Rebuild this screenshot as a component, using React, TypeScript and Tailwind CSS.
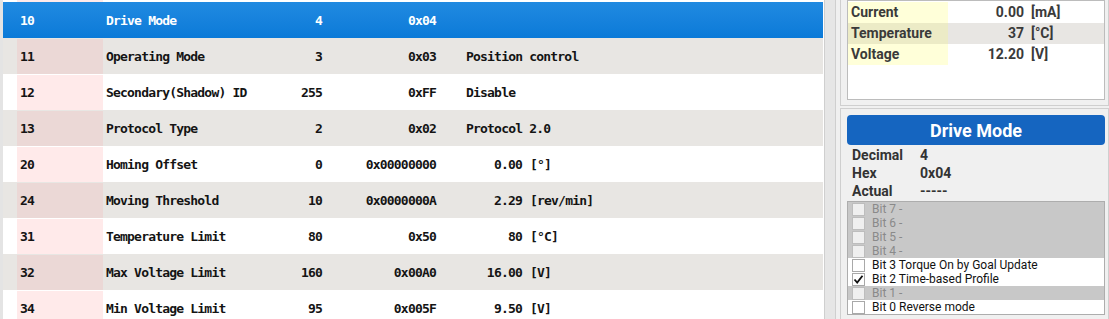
import React from 'react';

type Row = {
  addr: string;
  name: string;
  val: string;
  hex: string;
  desc?: string;
  num?: string;
  unit?: string;
};

const rows: Row[] = [
  { addr: '10', name: 'Drive Mode', val: '4', hex: '0x04', desc: '' },
  { addr: '11', name: 'Operating Mode', val: '3', hex: '0x03', desc: 'Position control' },
  { addr: '12', name: 'Secondary(Shadow) ID', val: '255', hex: '0xFF', desc: 'Disable' },
  { addr: '13', name: 'Protocol Type', val: '2', hex: '0x02', desc: 'Protocol 2.0' },
  { addr: '20', name: 'Homing Offset', val: '0', hex: '0x00000000', num: '0.00', unit: '[°]' },
  { addr: '24', name: 'Moving Threshold', val: '10', hex: '0x0000000A', num: '2.29', unit: '[rev/min]' },
  { addr: '31', name: 'Temperature Limit', val: '80', hex: '0x50', num: '80', unit: '[°C]' },
  { addr: '32', name: 'Max Voltage Limit', val: '160', hex: '0x00A0', num: '16.00', unit: '[V]' },
  { addr: '34', name: 'Min Voltage Limit', val: '95', hex: '0x005F', num: '9.50', unit: '[V]' },
];

const status = [
  { label: 'Current', value: '0.00', unit: '[mA]' },
  { label: 'Temperature', value: '37', unit: '[°C]' },
  { label: 'Voltage', value: '12.20', unit: '[V]' },
];

const bits = [
  { label: 'Bit 7 -', enabled: false, checked: false },
  { label: 'Bit 6 -', enabled: false, checked: false },
  { label: 'Bit 5 -', enabled: false, checked: false },
  { label: 'Bit 4 -', enabled: false, checked: false },
  { label: 'Bit 3 Torque On by Goal Update', enabled: true, checked: false },
  { label: 'Bit 2 Time-based Profile', enabled: true, checked: true },
  { label: 'Bit 1 -', enabled: false, checked: false },
  { label: 'Bit 0 Reverse mode', enabled: true, checked: false },
];

function TableRow({ row, index }: { row: Row; index: number }) {
  const selected = index === 0;
  const gray = index % 2 === 1;
  const rowBg = selected
    ? 'bg-linear-to-b from-[#208ae1] to-[#0a7ad8] text-white'
    : gray
      ? 'bg-[#e8e6e3] text-[#141414]'
      : 'bg-white text-[#141414]';
  const addrBg = selected ? '' : gray ? 'bg-[#ebd8d6]' : 'bg-[#ffeaea]';

  return (
    <div className={`flex h-[36px] items-center pt-[1px] ${rowBg}`}>
      <div className="w-[14px] h-full" />
      <div className={`w-[86px] h-full flex items-center pl-[3px] ${addrBg}`}>{row.addr}</div>
      <div className="w-[147px] pl-[3px] whitespace-pre">{row.name}</div>
      <div className="w-[76px] pr-[4px] text-right">{row.val}</div>
      <div className="w-[114px] pr-[4px] text-right">{row.hex}</div>
      {row.num !== undefined ? (
        <div className="flex">
          <span className="w-[82px] text-right">{row.num}</span>
          <span className="ml-[8px]">{row.unit}</span>
        </div>
      ) : (
        <div className="pl-[26px]">{row.desc}</div>
      )}
    </div>
  );
}

function Check({ enabled, checked }: { enabled: boolean; checked: boolean }) {
  return (
    <div
      className={`w-[13px] h-[13px] border flex items-center justify-center ${
        enabled ? 'bg-white border-[#a9a9a9]' : 'bg-[#efefef] border-[#bdbdbd]'
      }`}
    >
      {checked && (
        <svg width="11" height="11" viewBox="0 0 11 11">
          <path d="M1.5 5.5 L4.2 8.6 L9.5 1.8" fill="none" stroke="#111" strokeWidth="1.8" />
        </svg>
      )}
    </div>
  );
}

export default function App() {
  return (
    <div className="w-[1109px] h-[319px] flex overflow-hidden bg-[#f0f0f0]">
      {/* Control table */}
      <div
        className="w-[823px] h-full border-l-[3px] border-[#e4e4e4] bg-white overflow-hidden text-[13px] tracking-[-0.8px] font-bold"
        style={{ fontFamily: '"DejaVu Sans Mono", "Liberation Mono", monospace' }}
      >
        <div className="flex h-[2px] bg-white">
          <div className="w-[14px]" />
          <div className="w-[86px] bg-[#ffeaea]" />
        </div>
        {rows.map((r, i) => (
          <TableRow key={r.addr} row={r} index={i} />
        ))}
      </div>

      {/* Splitter */}
      <div className="w-[1px] h-full bg-white" />
      <div className="w-[12px] h-full bg-[#e6e6e6] border-x border-[#cfcfcf]" />

      {/* Right side */}
      <div
        className="w-[273px] h-full pl-[4px] flex flex-col"
        style={{ fontFamily: 'Roboto, "Liberation Sans", sans-serif' }}
      >
        <div className="w-[269px] h-[106px] border-x border-b border-[#cfcfcf] pl-[6px] pr-[3px]">
          <div className="h-[100px] bg-white border border-[#bcbcbc] pt-[1px]">
            {status.map((s, i) => (
              <div
                key={s.label}
                className={`flex h-[21px] items-center text-[14px] font-bold text-[#3a3a3a] ${
                  i % 2 === 1 ? 'bg-[#e8e6e3]' : ''
                }`}
              >
                <div
                  className={`w-[100px] h-full flex items-center pl-[3px] ${
                    i % 2 === 1 ? 'bg-[#ecebc6]' : 'bg-[#ffffd9]'
                  }`}
                >
                  {s.label}
                </div>
                <div className="w-[76px] text-right">{s.value}</div>
                <div className="ml-[7px]">{s.unit}</div>
              </div>
            ))}
          </div>
        </div>

        <div className="mt-[2px] w-[269px] flex-1 border-x border-t border-[#cfcfcf] pl-[6px] pr-[3px] pt-[6px]">
          <div className="h-[30px] rounded-[4px] bg-[#1565c0] flex items-center justify-center text-white text-[18px] font-bold">
            Drive Mode
          </div>
          <div className="mt-[1px] text-[14px] font-bold text-[#333]">
            <div className="flex h-[18px] items-center">
              <div className="w-[73px] pl-[5px]">Decimal</div>
              <div>4</div>
            </div>
            <div className="flex h-[18px] items-center">
              <div className="w-[73px] pl-[5px]">Hex</div>
              <div>0x04</div>
            </div>
            <div className="flex h-[18px] items-center">
              <div className="w-[73px] pl-[5px]">Actual</div>
              <div>-----</div>
            </div>
          </div>
          <div className="mt-[1px] border border-[#adadad] bg-white">
            {bits.map((b) => (
              <div
                key={b.label}
                className={`flex h-[14px] items-center text-[12px] ${
                  b.enabled ? 'bg-white text-[#111]' : 'bg-[#c8c8c8] text-[#8a8a8a]'
                }`}
              >
                <div className="ml-[4px]">
                  <Check enabled={b.enabled} checked={b.checked} />
                </div>
                <div className="ml-[7px] leading-none">{b.label}</div>
              </div>
            ))}
          </div>
        </div>
      </div>
    </div>
  );
}
